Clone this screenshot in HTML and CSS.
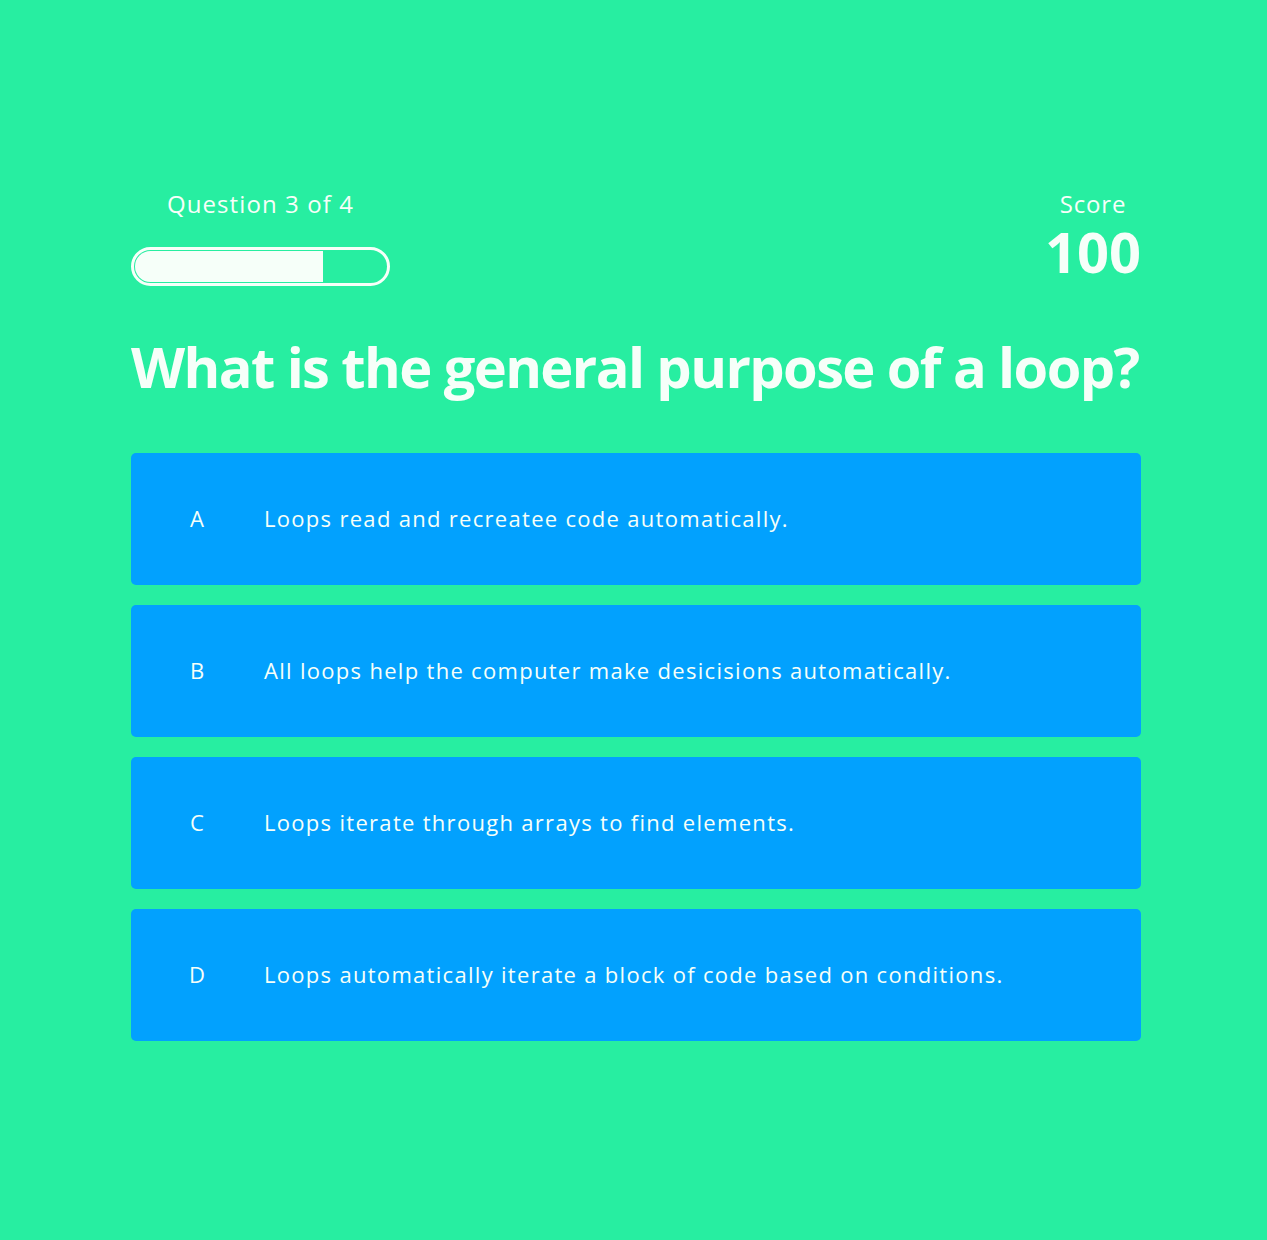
FILE: index.html
```html
<!DOCTYPE html>
<html lang="en">
<head>
<meta charset="utf-8">
<title>Quiz</title>
<link rel="stylesheet" href="styles.css">
</head>
<body>
<main class="quiz">
  <header class="hud">
    <div class="hud-progress">
      <p class="hud-label">Question 3 of 4</p>
      <div class="bar"><div class="bar-fill" style="width: 75%"></div></div>
    </div>
    <div class="hud-score">
      <p class="hud-label hud-label-score">Score</p>
      <p class="score-value">100</p>
    </div>
  </header>
  <h1 class="question">What is the general purpose of a loop?</h1>
  <div class="choices">
    <div class="choice"><span class="choice-key">A</span><span class="choice-text">Loops read and recreatee code automatically.</span></div>
    <div class="choice"><span class="choice-key">B</span><span class="choice-text">All loops help the computer make desicisions automatically.</span></div>
    <div class="choice"><span class="choice-key">C</span><span class="choice-text">Loops iterate through arrays to find elements.</span></div>
    <div class="choice"><span class="choice-key">D</span><span class="choice-text">Loops automatically iterate a block of code based on conditions.</span></div>
  </div>
</main>
</body>
</html>
```
FILE: styles.css
```css
html, body {
  margin: 0;
  padding: 0;
  background: #27eea1;
}
body {
  font-family: "Open Sans", "Noto Sans", sans-serif;
  color: #f6fff9;
  min-height: 1240px;
}
.quiz {
  width: 1010px;
  margin-left: 131px;
  padding-top: 187px;
}
.hud {
  display: flex;
  justify-content: space-between;
  align-items: flex-start;
}
.hud-progress {
  width: 259px;
  text-align: center;
}
.hud-label {
  margin: 0;
  font-size: 24px;
  line-height: 34px;
  letter-spacing: 1.1px;
}
.hud-label-score {
  letter-spacing: 0.8px;
}
.bar {
  margin-top: 26px;
  height: 31px;
  padding: 1px;
  border: 3px solid #f6fff9;
  border-radius: 20px;
  overflow: hidden;
}
.bar-fill {
  height: 100%;
  background: #f6fff9;
  border-radius: 16px 0 0 16px;
}
.hud-score {
  text-align: center;
  width: 96px;
}
.score-value {
  margin: 5px 0 0;
  font-size: 56px;
  font-weight: 700;
  line-height: 50px;
}
.question {
  margin: 40px 0 0;
  font-size: 56px;
  font-weight: 700;
  line-height: 80px;
  letter-spacing: -1.6px;
  white-space: nowrap;
}
.choices {
  margin-top: 47px;
  display: flex;
  flex-direction: column;
  gap: 20px;
}
.choice {
  height: 132px;
  padding-bottom: 2px;
  box-sizing: border-box;
  background: #02a1fe;
  border-radius: 5px;
  display: flex;
  align-items: center;
  font-size: 22px;
}
.choice-key {
  width: 132px;
  text-align: center;
}
.choice-text {
  margin-left: 1px;
  letter-spacing: 1.3px;
}
```
